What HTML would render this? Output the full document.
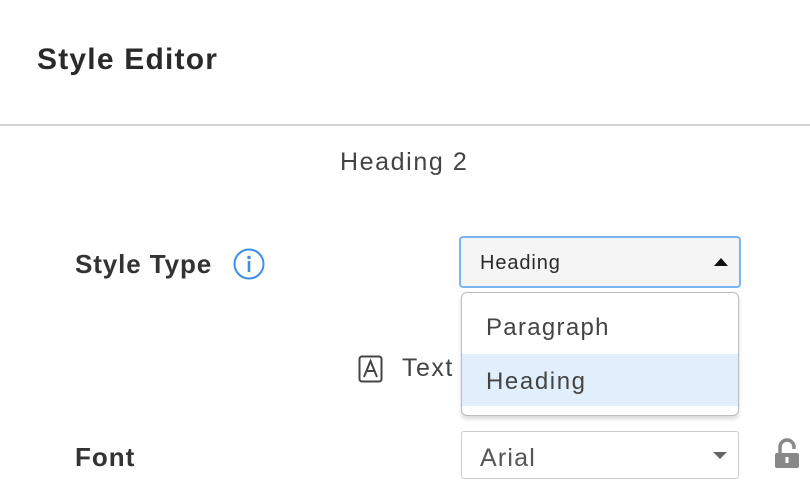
<!DOCTYPE html>
<html><head><style>
body{margin:0;width:810px;height:494px;background:#fff;position:relative;overflow:hidden;font-family:"Liberation Sans",sans-serif;color:#333}
.a{position:absolute;white-space:nowrap}
</style></head><body>
<div class="a" style="left:37px;top:43px;font-size:30px;font-weight:bold;color:#2a2a2a;letter-spacing:1.2px">Style Editor</div>
<div class="a" style="left:0;top:124px;width:810px;height:2px;background:#d4d4d4"></div>
<div class="a" style="left:340px;top:148px;font-size:25px;color:#444;letter-spacing:1.6px">Heading 2</div>
<div class="a" style="left:75px;top:249px;font-size:26px;font-weight:bold;color:#333;letter-spacing:0.9px">Style Type</div>
<svg class="a" style="left:232px;top:247px" width="34" height="34"><circle cx="17" cy="17" r="14.5" fill="none" stroke="#3b8fe8" stroke-width="2"/><circle cx="17" cy="10.5" r="1.8" fill="#3b8fe8"/><rect x="15.7" y="14" width="2.6" height="11" fill="#3b8fe8"/></svg>
<div class="a" style="left:459px;top:236px;width:278px;height:48px;background:#f5f5f5;border:2px solid #7ab5f3;border-radius:4px"></div>
<div class="a" style="left:480px;top:252px;font-size:20px;color:#2a2a2a;letter-spacing:0.9px">Heading</div>
<div class="a" style="left:714px;top:258px;width:0;height:0;border-left:7px solid transparent;border-right:7px solid transparent;border-bottom:8px solid #111"></div>
<svg class="a" style="left:358px;top:355px" width="26" height="28"><rect x="1.5" y="1.5" width="22" height="25" rx="2.5" fill="none" stroke="#444" stroke-width="2"/><path d="M6 22 L12.5 6 L19 22 M8.5 16 H16.5" fill="none" stroke="#444" stroke-width="2"/></svg>
<div class="a" style="left:402px;top:354px;font-size:25px;color:#444;letter-spacing:1.5px">Text</div>
<div class="a" style="left:461px;top:292px;width:276px;height:122px;background:#fff;border:1.5px solid #bdbdbd;border-radius:6px;box-shadow:0 3px 4px rgba(0,0,0,.15);overflow:hidden">
<div class="a" style="left:0;top:61px;width:276px;height:52px;background:#e1effc"></div>
<div class="a" style="left:24px;top:21px;font-size:24px;color:#444;letter-spacing:1.3px">Paragraph</div>
<div class="a" style="left:24px;top:75px;font-size:24px;color:#444;letter-spacing:1.6px">Heading</div>
</div>
<div class="a" style="left:75px;top:442px;font-size:26px;font-weight:bold;color:#333;letter-spacing:1px">Font</div>
<div class="a" style="left:461px;top:431px;width:276px;height:46px;border:1.5px solid #ccc;border-radius:3px"></div>
<div class="a" style="left:480px;top:444px;font-size:25px;color:#555;letter-spacing:1.2px">Arial</div>
<div class="a" style="left:713px;top:452px;width:0;height:0;border-left:7px solid transparent;border-right:7px solid transparent;border-top:7px solid #666"></div>
<svg class="a" style="left:773px;top:437px" width="28" height="32"><path d="M7 16 V10 a7 7 0 0 1 14 0 V12" fill="none" stroke="#888" stroke-width="3.5"/><rect x="2" y="16" width="24" height="15" rx="2" fill="#888"/><rect x="12.5" y="20" width="3" height="6" fill="#fff"/></svg>
</body></html>
